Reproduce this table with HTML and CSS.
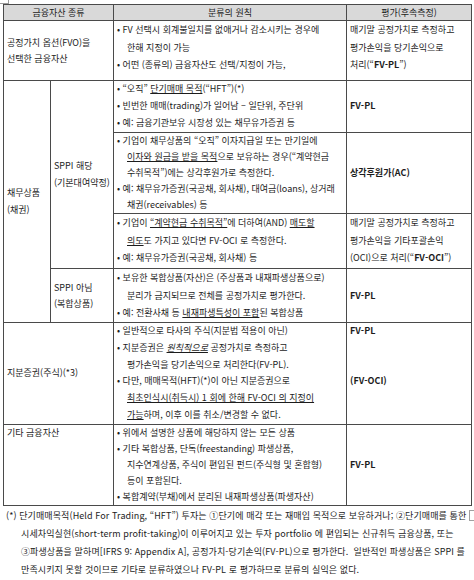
FILE: index.html
```html
<!DOCTYPE html>
<html lang="ko">
<head>
<meta charset="utf-8">
<title>금융자산 분류</title>
<link rel="stylesheet" href="styles.css">
</head>
<body>
<div class="page">
  <div class="topbar"><span class="handle"></span></div>
  <table class="grid">
    <colgroup>
      <col class="c-a"><col class="c-b"><col class="c-c"><col class="c-d">
    </colgroup>
    <thead>
      <tr class="r-head">
        <th colspan="2">금융자산 종류</th>
        <th>분류의 원칙</th>
        <th>평가(후속측정)</th>
      </tr>
    </thead>
    <tbody>
      <tr class="r-fvo">
        <td colspan="2" class="cat mid pad-fvo">공정가치 옵션(FVO)을<br>선택한 금융자산</td>
        <td class="rule wide">
          <div class="li">• FV 선택시 회계불일치를 없애거나 감소시키는 경우에<br>한해 지정이 가능</div>
          <div class="li">• 어떤 (종류의) 금융자산도 선택/지정이 가능,</div>
        </td>
        <td class="val wide">매기말 공정가치로 측정하고<br>평가손익을 당기손익으로<br>처리(“<b>FV-PL</b>”)</td>
      </tr>
      <tr class="r-hft">
        <td rowspan="4" class="cat mid pad-debt">채무상품<br>(채권)</td>
        <td rowspan="3" class="sub mid pad-sppi">SPPI 해당<br>(기본대여약정)</td>
        <td class="rule">
          <div class="li">• “오직” <u>단기매매 목적</u>(“HFT”)(*)</div>
          <div class="li">• 빈번한 매매(trading)가 일어남 – 일단위, 주단위</div>
          <div class="li">• 예: 금융기관보유 시장성 있는 채무유가증권 등</div>
        </td>
        <td class="val mid"><b>FV-PL</b></td>
      </tr>
      <tr class="r-ac">
        <td class="rule">
          <div class="li">• 기업이 채무상품의 “오직” 이자지급일 또는 만기일에<br><u>이자와 원금을 받을 목적</u>으로 보유하는 경우(“계약현금<br>수취목적”)에는 상각후원가로 측정한다.</div>
          <div class="li">• 예: 채무유가증권(국공채, 회사채), 대여금(loans), 상거래<br>채권(receivables) 등</div>
        </td>
        <td class="val mid"><b>상각후원가(AC)</b></td>
      </tr>
      <tr class="r-oci">
        <td class="rule wide">
          <div class="li">• 기업이 <u>“계약현금 수취목적”</u>에 더하여(AND) <u>매도할</u><br><u>의도</u>도 가지고 있다면 FV-OCI 로 측정한다.</div>
          <div class="li">• 예: 채무유가증권(국공채, 회사채) 등</div>
        </td>
        <td class="val wide">매기말 공정가치로 측정하고<br>평가손익을 기타포괄손익<br>(OCI)으로 처리(“<b>FV-OCI</b>”)</td>
      </tr>
      <tr class="r-comp">
        <td class="sub mid pad-comp">SPPI 아님<br>(복합상품)</td>
        <td class="rule wide">
          <div class="li">• 보유한 복합상품(자산)은 (주상품과 내재파생상품으로)<br>분리가 금지되므로 전체를 공정가치로 평가한다.</div>
          <div class="li">• 예: 전환사채 등 <u>내재파생특성이 포함</u>된 복합상품</div>
        </td>
        <td class="val mid"><b>FV-PL</b></td>
      </tr>
      <tr class="r-eq">
        <td colspan="2" class="cat mid">지분증권(주식)(*3)</td>
        <td class="rule">
          <div class="li">• 일반적으로 타사의 주식(지분법 적용이 아닌)</div>
          <div class="li">• 지분증권은 <i><u>원칙적으로</u></i> 공정가치로 측정하고<br>평가손익을 당기손익으로 처리한다(FV-PL).</div>
          <div class="li">• 다만, 매매목적(HFT)(*)이 아닌 지분증권으로<br><u>최초인식시(취득시) 1 회에 한해 FV-OCI 의 지정이</u><br><u>가능</u>하며, 이후 이를 취소/변경할 수 없다.</div>
        </td>
        <td class="val"><b>FV-PL</b><br><br><br><b>(FV-OCI)</b></td>
      </tr>
      <tr class="r-etc">
        <td colspan="2" class="cat">기타 금융자산</td>
        <td class="rule">
          <div class="li">• 위에서 설명한 상품에 해당하지 않는 모든 상품</div>
          <div class="li">• 기타 복합상품, 단독(freestanding) 파생상품,<br>지수연계상품, 주식이 편입된 펀드(주식형 및 혼합형)<br>등이 포함된다.</div>
          <div class="li">• 복합계약(부채)에서 분리된 내재파생상품(파생자산)</div>
        </td>
        <td class="val mid"><b>FV-PL</b></td>
      </tr>
    </tbody>
  </table>
  <p class="note">(*) 단기매매목적(Held For Trading, “HFT”) 투자는 ①단기에 매각 또는 재매입 목적으로 보유하거나; ②단기매매를 통한<span class="mark"></span><br>시세차익실현(short-term profit-taking)이 이루어지고 있는 투자 portfolio 에 편입되는 신규취득 금융상품, 또는<br>③파생상품을 말하며[IFRS 9: Appendix A], 공정가치-당기손익(FV-PL)으로 평가한다.&nbsp; 일반적인 파생상품은 SPPI 를<br>만족시키지 못할 것이므로 기타로 분류하였으나 FV-PL 로 평가하므로 분류의 실익은 없다.</p>
</div>
</body>
</html>
```

FILE: styles.css
```css
html, body {
  margin: 0;
  padding: 0;
  background: #ffffff;
}

.page {
  width: 474px;
  height: 580px;
  overflow: hidden;
  font-family: "Noto Sans CJK KR", "Noto Sans", sans-serif;
  font-size: 9px;
  color: #1c1c1c;
}

.topbar {
  height: 4px;
  position: relative;
}

.handle {
  position: absolute;
  left: 0;
  top: -1px;
  width: 9px;
  height: 5px;
  border: 1px solid #9a9a9a;
  border-left: none;
  box-sizing: border-box;
  background: #fff;
}

.grid {
  margin-left: 3px;
  width: 468px;
  table-layout: fixed;
  border-collapse: collapse;
  line-height: 16px;
}

.c-a { width: 47px; }
.c-b { width: 63px; }
.c-c { width: 233px; }
.c-d { width: 125px; }

.grid th,
.grid td {
  border: 1px solid #4a4a4a;
  padding: 0 3px;
  vertical-align: top;
  white-space: nowrap;
  overflow: hidden;
  text-align: left;
  font-weight: normal;
}

.grid td.wide {
  line-height: 17.5px;
}

.grid th {
  background: #d9d9d9;
  text-align: center;
  vertical-align: middle;
  line-height: 14px;
}

.r-head { height: 16px; }
.r-fvo { height: 60px; }
.r-hft { height: 52px; }
.r-ac { height: 81px; }
.r-oci { height: 55px; }
.r-comp { height: 54px; }
.r-eq { height: 101px; }
.r-etc { height: 80px; }

.r-hft td,
.r-eq td {
  line-height: 16.8px;
}

.grid td.mid { vertical-align: middle; }

.pad-fvo { padding-bottom: 9px; }
.pad-debt { padding-bottom: 24px; }
.pad-sppi { padding-bottom: 44px; }
.pad-comp { padding-bottom: 6px; }

.li {
  padding-left: 10px;
  text-indent: -10px;
}

.val b,
.rule b {
  font-weight: 700;
}

.note {
  margin: 1px 0 0 3px;
  padding-left: 18px;
  text-indent: -15px;
  line-height: 18px;
  white-space: nowrap;
  letter-spacing: 0.1px;
}

.mark {
  display: inline-block;
  width: 5px;
  height: 11px;
  margin-left: 3px;
  border: 1px solid #a0a0a0;
  border-right: none;
  vertical-align: -2px;
  box-sizing: border-box;
}
```
